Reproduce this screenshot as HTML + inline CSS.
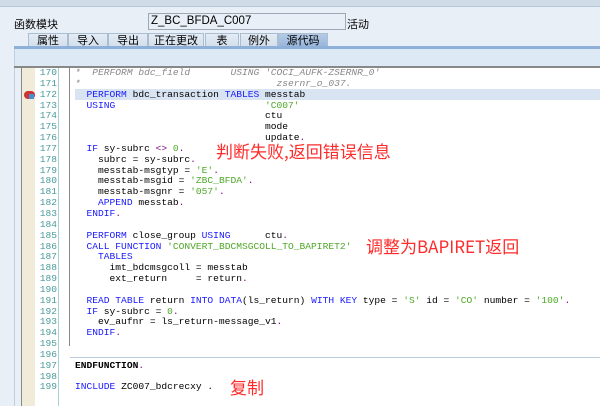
<!DOCTYPE html>
<html><head><meta charset="utf-8"><style>
body{margin:0;width:600px;height:406px;overflow:hidden;background:#e8eff7;font-family:"Liberation Sans","Noto Sans CJK SC",sans-serif;position:relative}
.a{position:absolute}
.code{font-family:"Liberation Mono",monospace;font-size:9.6px;white-space:pre;line-height:10.85px;color:#000}
.k{color:#1a1aff}.s{color:#4fa828}.c{color:#888;font-style:italic}.p{color:#800080}
.n{position:absolute;left:35px;width:22px;text-align:right;font-family:"Liberation Mono",monospace;font-size:9.6px;color:#4a9a9a;line-height:10.85px}
.tab{position:absolute;top:33px;height:15px;font-size:11px;line-height:15px;text-align:center;background:linear-gradient(#e4ecf5,#cfdcea);border:1px solid #a9bdd3;border-bottom:none}
.r{position:absolute;color:#ff2a2a;font-size:17px;font-family:"Noto Sans CJK SC","Liberation Sans",sans-serif;line-height:20px}
</style></head><body>
<div class="a" style="left:0;top:0;width:600px;height:6px;background:#cfdbe6;border-bottom:1px solid #b8c8d8"></div>
<div class="a" style="left:14px;top:16px;font-size:11px">函数模块</div>
<div class="a" style="left:148px;top:13px;width:194px;height:15px;background:#e8eff7;border:1px solid #9aa8b8;font-family:'Liberation Sans',sans-serif;font-size:11.5px;line-height:15px;padding-left:2px">Z_BC_BFDA_C007</div>
<div class="a" style="left:347px;top:16px;font-size:11px">活动</div>
<div class="tab" style="left:28px;width:38px">属性</div>
<div class="tab" style="left:68px;width:38px">导入</div>
<div class="tab" style="left:108px;width:38px">导出</div>
<div class="tab" style="left:148px;width:54px">正在更改</div>
<div class="tab" style="left:205px;width:32px">表</div>
<div class="tab" style="left:240px;width:36px">例外</div>
<div class="tab" style="left:278px;width:48px;background:linear-gradient(#b5cbe6,#93b1d8)">源代码</div>
<div class="a" style="left:14px;top:46px;width:586px;height:3px;background:#8fb0d8"></div>
<div class="a" style="left:14px;top:49px;width:586px;height:17px;background:#dde9f4;border-left:1px solid #c0cfdf"></div>
<div class="a" style="left:14px;top:66px;width:586px;height:2px;background:#888"></div>
<div class="a" style="left:14px;top:68px;width:7px;height:338px;background:#e8eff7;border-left:1px solid #c0cfdf"></div>
<div class="a" style="left:21px;top:68px;width:579px;height:338px;background:#fff;border-left:1px solid #888"></div>
<div class="a" style="left:22px;top:68px;width:13px;height:338px;background:#f1ebd9"></div>
<div class="a" style="left:58px;top:68px;width:1px;height:338px;background:#a8d0d0"></div>
<div class="a" style="left:69px;top:68px;width:1px;height:278px;background:#888"></div>
<div class="a" style="left:75px;top:89px;width:525px;height:11px;background:#d8e4f2"></div>
<div class="a" style="left:70px;top:357px;width:530px;height:1px;background:#bcd"></div>
<div class="a" style="left:24px;top:91px;width:11px;height:8px;background:#c33;border-radius:4px"></div>
<div class="a" style="left:29px;top:94px;width:5px;height:5px;background:#4a8ed0"></div>
<div class="a" style="left:0;top:68px;width:600px">
<div class="n" style="top:0">170<br>171<br>172<br>173<br>174<br>175<br>176<br>177<br>178<br>179<br>180<br>181<br>182<br>183<br>184<br>185<br>186<br>187<br>188<br>189<br>190<br>191<br>192<br>193<br>194<br>195<br>196<br>197<br>198<br>199</div>
<div class="code a" style="left:75px;top:0"><span class="c">*  PERFORM bdc_field       USING 'COCI_AUFK-ZSERNR_0'</span>
<span class="c">*                                  zsernr_o_037.</span>
  <span class="k">PERFORM</span> bdc_transaction <span class="k">TABLES</span> messtab
  <span class="k">USING</span>                          <span class="s">'C007'</span>
                                 ctu
                                 mode
                                 update<span class="p">.</span>
  <span class="k">IF</span> sy-subrc <span class="p">&lt;&gt;</span> <span class="s">0</span><span class="p">.</span>
    subrc = sy-subrc<span class="p">.</span>
    messtab-msgtyp = <span class="s">'E'</span><span class="p">.</span>
    messtab-msgid = <span class="s">'ZBC_BFDA'</span><span class="p">.</span>
    messtab-msgnr = <span class="s">'057'</span><span class="p">.</span>
    <span class="k">APPEND</span> messtab<span class="p">.</span>
  <span class="k">ENDIF</span><span class="p">.</span>

  <span class="k">PERFORM</span> close_group <span class="k">USING</span>      ctu<span class="p">.</span>
  <span class="k">CALL FUNCTION</span> <span class="s">'CONVERT_BDCMSGCOLL_TO_BAPIRET2'</span>
    <span class="k">TABLES</span>
      imt_bdcmsgcoll = messtab
      ext_return     = return<span class="p">.</span>

  <span class="k">READ TABLE</span> return <span class="k">INTO DATA</span>(ls_return) <span class="k">WITH KEY</span> type = <span class="s">'S'</span> id = <span class="s">'CO'</span> number = <span class="s">'100'</span><span class="p">.</span>
  <span class="k">IF</span> sy-subrc = <span class="s">0</span><span class="p">.</span>
    ev_aufnr = ls_return-message_v1<span class="p">.</span>
  <span class="k">ENDIF</span><span class="p">.</span>


<b>ENDFUNCTION</b><span class="p">.</span>

<span class="k">INCLUDE</span> ZC007_bdcrecxy .</div>
</div>
<div class="r" style="left:216px;top:141px">判断失败,返回错误信息</div>
<div class="r" style="left:366px;top:236px">调整为BAPIRET返回</div>
<div class="r" style="left:230px;top:377px">复制</div>
</body></html>
